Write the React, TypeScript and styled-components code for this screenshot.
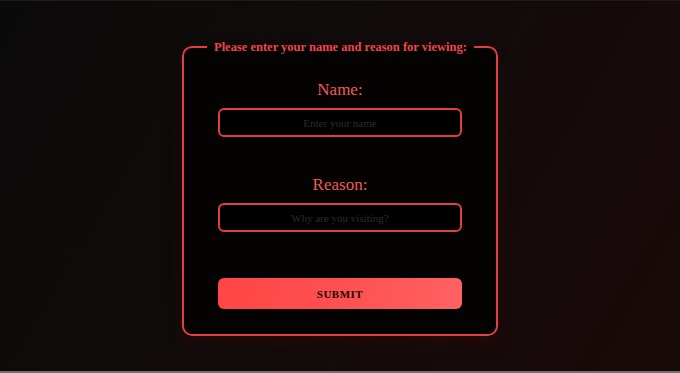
import styled, { createGlobalStyle } from 'styled-components';

const GlobalStyle = createGlobalStyle`
  html, body {
    margin: 0;
    padding: 0;
  }
  body {
    font-family: "Liberation Serif", "Times New Roman", serif;
  }
`;

export default function App() {
  return (
    <Page>
      <GlobalStyle />
      <Form onSubmit={(e) => e.preventDefault()}>
        <Fieldset>
          <Legend>Please enter your name and reason for viewing:</Legend>
          <Field>
            <Label htmlFor="name">Name:</Label>
            <Input id="name" placeholder="Enter your name" />
          </Field>
          <Field $gap={38}>
            <Label htmlFor="reason">Reason:</Label>
            <Input id="reason" placeholder="Why are you visiting?" />
          </Field>
          <Submit type="submit">SUBMIT</Submit>
        </Fieldset>
      </Form>
    </Page>
  );
}

const Page = styled.div`
  box-sizing: border-box;
  height: 373px;
  border-top: 1px solid #1c1c1c;
  border-bottom: 2px solid #6f6f6f;
  background: linear-gradient(120deg, #0b0a0a 0%, #110b0b 45%, #1a0909 100%);
  display: flex;
  justify-content: center;
  padding-top: 38px;
`;

const Form = styled.form`
  width: 316px;
`;

const Fieldset = styled.fieldset`
  box-sizing: border-box;
  width: 316px;
  min-width: 0;
  height: 297px;
  margin: 0;
  padding: 25px 34px 0;
  border: 2px solid #e0403f;
  border-radius: 10px;
  background: #050202;
  box-shadow: 0 8px 14px rgba(60, 10, 10, 0.35);
`;

const Legend = styled.legend`
  margin: 0 0 0 -11px;
  padding: 0 7px;
  white-space: nowrap;
  font-weight: bold;
  font-size: 12.5px;
  line-height: 16px;
  color: #f04848;
`;

const Field = styled.div<{ $gap?: number }>`
  display: flex;
  flex-direction: column;
  align-items: center;
  gap: 8px;
  margin-top: ${(p) => p.$gap ?? 0}px;
`;

const Label = styled.label`
  font-size: 17px;
  line-height: 20px;
  color: #f05a55;
`;

const Input = styled.input`
  box-sizing: border-box;
  width: 100%;
  height: 29px;
  border: 2px solid #e0403f;
  border-radius: 6px;
  background: #000;
  color: #ddd;
  text-align: center;
  font-family: "Liberation Serif", "Times New Roman", serif;
  font-size: 11px;
  outline: none;

  &::placeholder {
    color: #2e2e2e;
  }
`;

const Submit = styled.button`
  display: block;
  margin-top: 46px;
  height: 31px;
  width: 100%;
  border: none;
  border-radius: 6px;
  background: linear-gradient(100deg, #ff4646 0%, #ff5050 50%, #ff6262 100%);
  color: #1a0707;
  font-family: "Liberation Serif", "Times New Roman", serif;
  font-weight: bold;
  font-size: 11px;
  letter-spacing: 0.5px;
  cursor: pointer;
`;
